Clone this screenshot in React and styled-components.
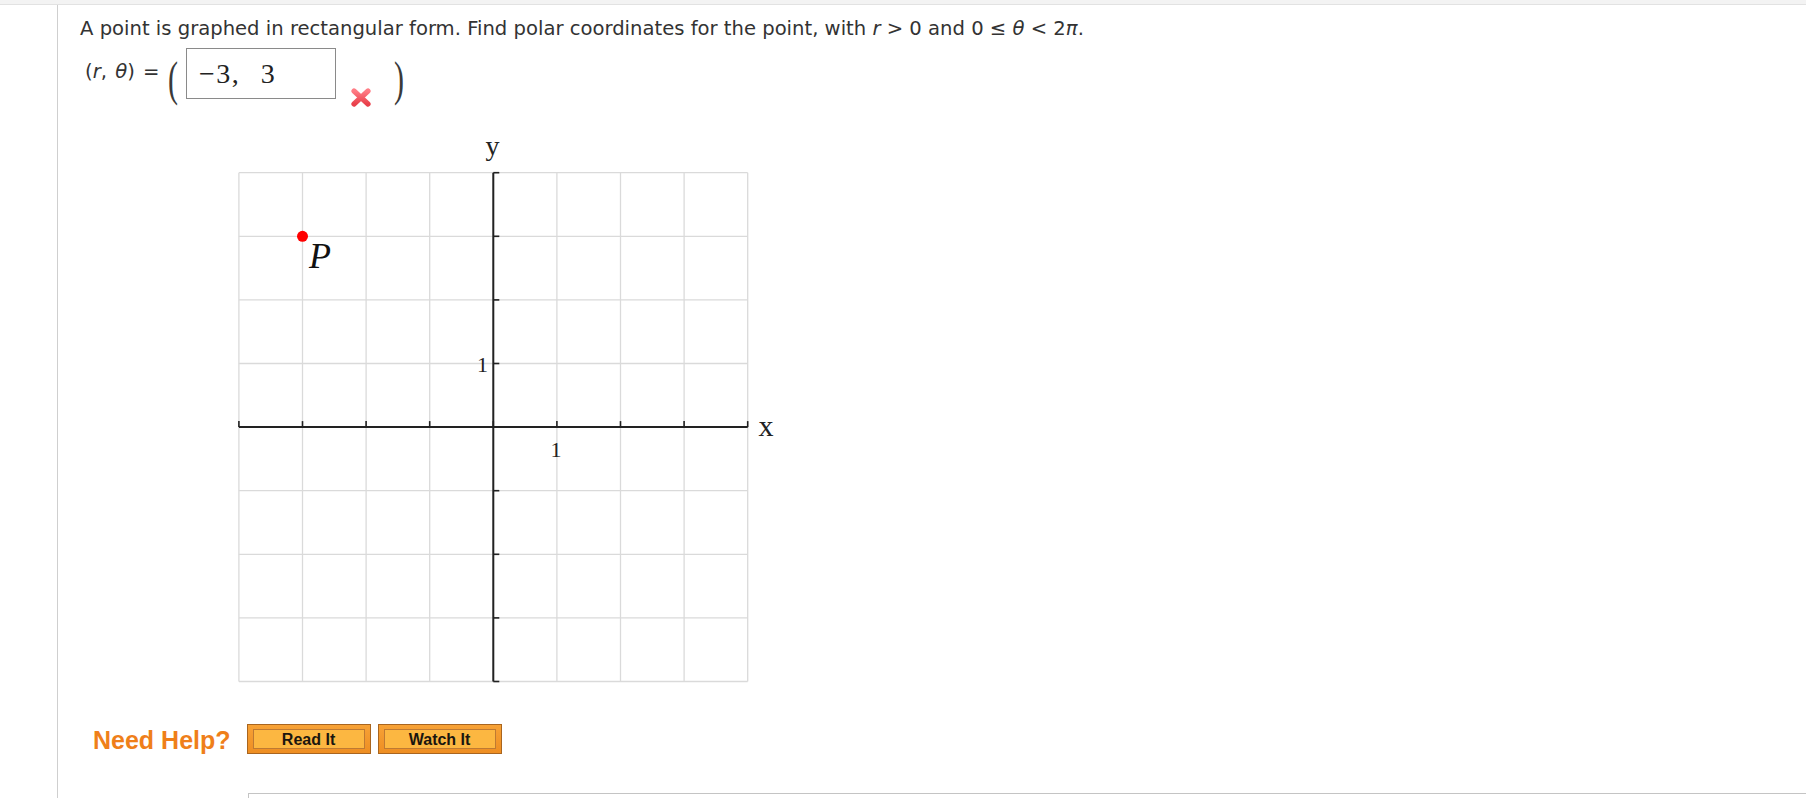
import styled, { createGlobalStyle } from "styled-components";

const GlobalStyle = createGlobalStyle`
  html, body {
    margin: 0;
    padding: 0;
    background: #fff;
    overflow: hidden;
  }
  body {
    font-family: "DejaVu Sans", Verdana, sans-serif;
    color: #333;
  }
`;

const TopStrip = styled.div`
  height: 4px;
  background: #f3f3f3;
  border-bottom: 1px solid #e2e2e2;
`;

const Page = styled.div`
  margin-left: 57px;
  border-left: 1px solid #cfcfcf;
  padding-left: 22px;
  min-height: 793px;
`;

const Question = styled.p`
  margin: 0;
  padding-top: 12px;
  font-size: 19.6px;
  line-height: 24px;
  white-space: nowrap;
`;

const AnswerRow = styled.div`
  display: flex;
  align-items: flex-start;
  height: 51px;
  margin-top: 7px;
  padding-left: 5px;
`;

const Label = styled.span`
  width: 76px;
  font-size: 19.6px;
  line-height: 24px;
  word-spacing: 2px;
  margin-top: 12px;
  white-space: nowrap;
`;

const Paren = styled.span`
  font-family: "Liberation Serif", serif;
  font-size: 30px;
  line-height: 30px;
  color: #3a3a3a;
  display: inline-block;
  transform: scaleY(1.62);
  transform-origin: top;
  margin-top: 6px;
  margin-left: ${(p) => p.$ml}px;
`;

const AnswerBox = styled.div`
  box-sizing: border-box;
  width: 150px;
  height: 51px;
  border: 1px solid #8a8a8a;
  margin-left: 8px;
  padding-left: 12px;
  font-family: "Liberation Serif", serif;
  font-size: 28px;
  letter-spacing: 1.5px;
  word-spacing: 12px;
  line-height: 49px;
  color: #222;
  white-space: nowrap;
`;

const WrongMark = styled.svg`
  margin-top: 40px;
  margin-left: 15px;
  flex-shrink: 0;
`;

const Graph = styled.svg`
  display: block;
  margin-top: 31px;
  margin-left: 140px;
`;

const HelpRow = styled.div`
  display: flex;
  align-items: center;
  height: 30px;
  margin-top: 34px;
  padding-left: 13px;
`;

const HelpTitle = styled.span`
  font-family: "Liberation Sans", Arial, sans-serif;
  font-weight: bold;
  font-size: 25px;
  color: #ef7f1a;
  margin-right: 16px;
  margin-top: 2px;
`;

const HelpButton = styled.button`
  box-sizing: border-box;
  width: 124px;
  height: 30px;
  padding: 4px 5px 4px 5px;
  margin-right: 7px;
  border: 1px solid #a9651f;
  background: linear-gradient(#f7a236, #ee8e22);
  cursor: pointer;
  display: flex;
`;

const HelpButtonFace = styled.span`
  flex: 1;
  border: 1px solid #bf7a32;
  background: #fcb741;
  font-family: "Liberation Sans", Arial, sans-serif;
  font-weight: bold;
  font-size: 16px;
  line-height: 19px;
  color: #1a160f;
  text-align: center;
`;

const NextPanel = styled.div`
  margin-top: 39px;
  margin-left: 168px;
  height: 20px;
  border-top: 1px solid #c4c4c4;
  border-left: 1px solid #c4c4c4;
`;

const X0 = 18.9;
const Y0 = 42.7;
const CELL = 63.6;
const N = 8;

function CoordinateGraph() {
  const idx = Array.from({ length: N + 1 }, (_, i) => i);
  const axisX = X0 + 4 * CELL;
  const axisY = Y0 + 4 * CELL;
  const right = X0 + N * CELL;
  const bottom = Y0 + N * CELL;
  const px = axisX - 3 * CELL;
  const py = axisY - 3 * CELL;
  return (
    <Graph width="580" height="560" viewBox="0 0 580 560">
      {idx.map((i) => (
        <line key={"v" + i} x1={X0 + i * CELL} y1={Y0} x2={X0 + i * CELL} y2={bottom} stroke="#dadada" strokeWidth="1.3" />
      ))}
      {idx.map((i) => (
        <line key={"h" + i} x1={X0} y1={Y0 + i * CELL} x2={right} y2={Y0 + i * CELL} stroke="#dadada" strokeWidth="1.3" />
      ))}
      <line x1={X0} y1={axisY} x2={right} y2={axisY} stroke="#222" strokeWidth="2" />
      <line x1={axisX} y1={Y0} x2={axisX} y2={bottom} stroke="#222" strokeWidth="2" />
      {idx.map((i) => (
        <line key={"tx" + i} x1={X0 + i * CELL} y1={axisY} x2={X0 + i * CELL} y2={axisY - 6} stroke="#222" strokeWidth="1.6" />
      ))}
      {idx.map((i) => (
        <line key={"ty" + i} x1={axisX} y1={Y0 + i * CELL} x2={axisX + 6} y2={Y0 + i * CELL} stroke="#222" strokeWidth="1.6" />
      ))}
      <g fontFamily="'Liberation Serif', serif" fill="#222">
        <text x="272.5" y="24.5" fontSize="28" textAnchor="middle">y</text>
        <text x="546" y="306" fontSize="30" textAnchor="middle">x</text>
        <text x="268" y="242" fontSize="22" textAnchor="end">1</text>
        <text x="336" y="327" fontSize="22" textAnchor="middle">1</text>
        <text x="89" y="138" fontSize="36" fontStyle="italic" fill="#111">P</text>
      </g>
      <circle cx={px} cy={py} r="5.5" fill="#ff0000" />
    </Graph>
  );
}

export default function App() {
  return (
    <>
      <GlobalStyle />
      <TopStrip />
      <Page>
        <Question>
          A point is graphed in rectangular form. Find polar coordinates for the point, with <i>r</i> &gt; 0 and 0 ≤ <i>θ</i> &lt; 2<i>π</i>.
        </Question>
        <AnswerRow>
          <Label>
            (<i>r</i>, <i>θ</i>) =
          </Label>
          <Paren $ml={7}>(</Paren>
          <AnswerBox>−3, 3</AnswerBox>
          <WrongMark width="20" height="19" viewBox="0 0 20 19">
            <defs>
              <linearGradient id="xg" x1="0" y1="0" x2="0" y2="1">
                <stop offset="0" stopColor="#ff7c85" />
                <stop offset="1" stopColor="#e9404b" />
              </linearGradient>
            </defs>
            <path d="M3 3 L17 16 M17 3 L3 16" stroke="url(#xg)" strokeWidth="5.2" strokeLinecap="round" />
          </WrongMark>
          <Paren $ml={23}>)</Paren>
        </AnswerRow>
        <CoordinateGraph />
        <HelpRow>
          <HelpTitle>Need Help?</HelpTitle>
          <HelpButton>
            <HelpButtonFace>Read It</HelpButtonFace>
          </HelpButton>
          <HelpButton>
            <HelpButtonFace>Watch It</HelpButtonFace>
          </HelpButton>
        </HelpRow>
        <NextPanel />
      </Page>
    </>
  );
}
